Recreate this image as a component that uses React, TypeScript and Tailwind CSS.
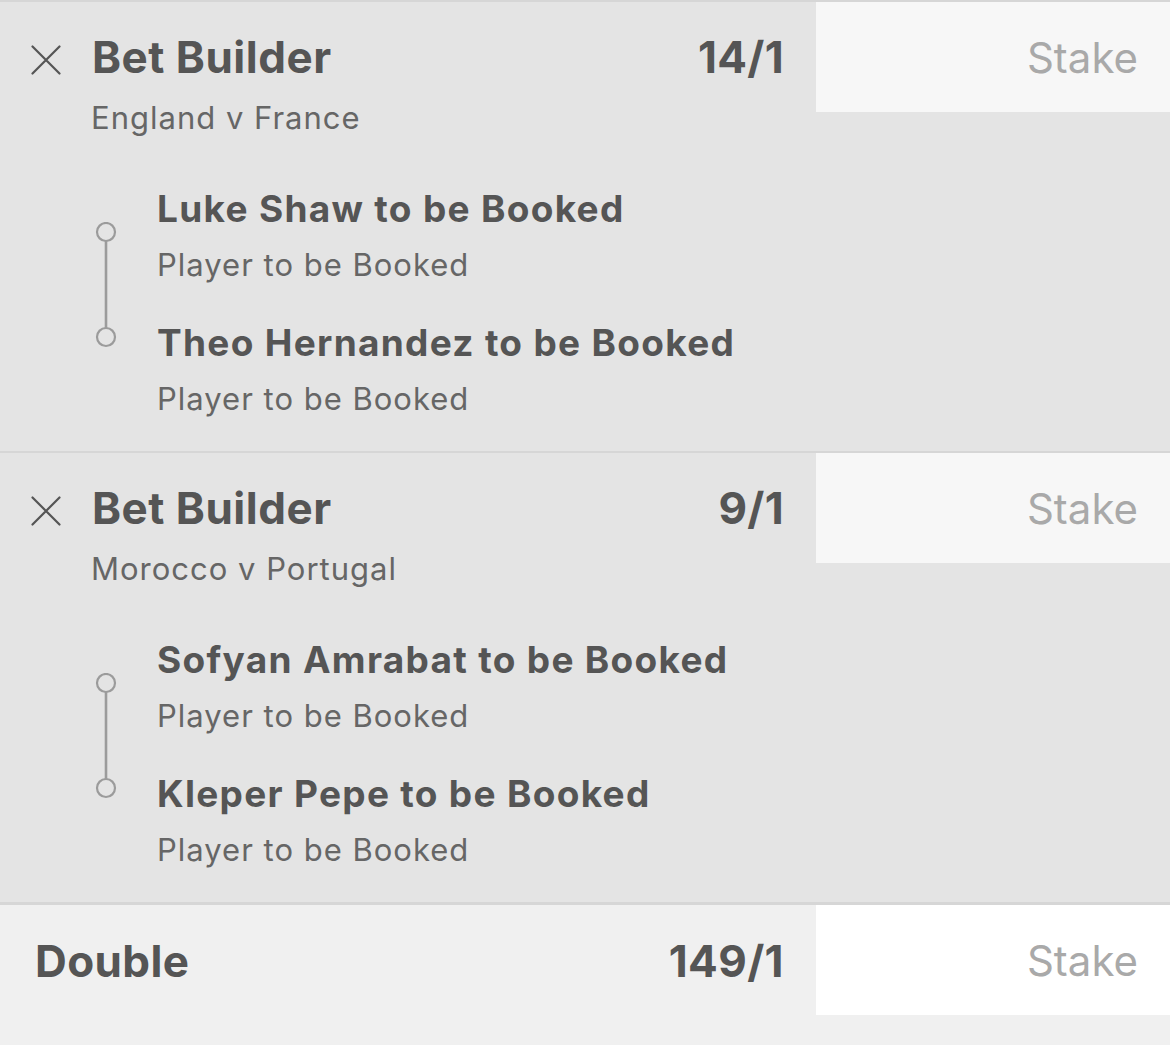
import React from "react";

type Leg = { name: string; market: string };
type Builder = { event: string; odds: string; legs: Leg[] };

const builders: Builder[] = [
  {
    event: "England v France",
    odds: "14/1",
    legs: [
      { name: "Luke Shaw to be Booked", market: "Player to be Booked" },
      { name: "Theo Hernandez to be Booked", market: "Player to be Booked" },
    ],
  },
  {
    event: "Morocco v Portugal",
    odds: "9/1",
    legs: [
      { name: "Sofyan Amrabat to be Booked", market: "Player to be Booked" },
      { name: "Kleper Pepe to be Booked", market: "Player to be Booked" },
    ],
  },
];

function CloseIcon() {
  return (
    <svg width="30" height="30" viewBox="0 0 30 30" className="mt-[14px] shrink-0">
      <path d="M1.5 1.5 L28.5 28.5 M28.5 1.5 L1.5 28.5" stroke="#555" strokeWidth="2.2" strokeLinecap="round" fill="none" />
    </svg>
  );
}

function Timeline() {
  return (
    <svg width="22" height="128" viewBox="0 0 22 128">
      <line x1="11" y1="19" x2="11" y2="106" stroke="#9b9b9b" strokeWidth="2.6" />
      <circle cx="11" cy="10" r="9" stroke="#9b9b9b" strokeWidth="2.2" fill="none" />
      <circle cx="11" cy="115" r="9" stroke="#9b9b9b" strokeWidth="2.2" fill="none" />
    </svg>
  );
}

function StakeBox({ bg }: { bg: string }) {
  return (
    <div
      className={`flex h-[110px] w-[354px] shrink-0 items-center justify-end pr-[32px] text-[42px] text-[#a9a9a9] ${bg}`}
    >
      Stake
    </div>
  );
}

function BuilderCard({ b }: { b: Builder }) {
  return (
    <section className="flex border-t-2 border-[#d6d6d6] bg-[#e4e4e4]">
      <div className="flex-1 pb-[34px]">
        <div className="flex items-start pl-[31px] pr-[32px] pt-[29px]">
          <CloseIcon />
          <div className="ml-[31px] flex-1 text-[44px] font-bold leading-[52px] tracking-[0.5px] text-[#555]">
            Bet Builder
          </div>
          <div className="text-[44px] font-bold leading-[52px] tracking-[0.3px] text-[#555]">{b.odds}</div>
        </div>
        <div className="mt-[17px] pl-[91px] text-[31px] leading-[36px] tracking-[1px] text-[#666]">{b.event}</div>
        <div className="mt-[51px] flex pl-[95px]">
          <div className="w-[62px] shrink-0 pt-[35px]">
            <Timeline />
          </div>
          <div className="flex flex-col gap-[38px]">
            {b.legs.map((l) => (
              <div key={l.name} className="flex flex-col">
                <div className="text-[37px] font-bold leading-[44px] tracking-[1.3px] text-[#555]">{l.name}</div>
                <div className="mt-[16px] text-[31px] leading-[36px] tracking-[1px] text-[#666]">{l.market}</div>
              </div>
            ))}
          </div>
        </div>
      </div>
      <StakeBox bg="bg-[#f7f7f7]" />
    </section>
  );
}

export default function App() {
  return (
    <div className="min-h-screen bg-[#f0f0f0] font-['Inter',sans-serif]">
      {builders.map((b) => (
        <BuilderCard key={b.event} b={b} />
      ))}
      <section className="flex border-t-[3px] border-[#d6d6d6] bg-[#f0f0f0]">
        <div className="flex h-[111px] flex-1 items-center justify-between pl-[35px] pr-[32px] text-[44px] font-bold tracking-[0.4px] text-[#555]">
          <span>Double</span>
          <span>149/1</span>
        </div>
        <StakeBox bg="bg-white" />
      </section>
    </div>
  );
}
